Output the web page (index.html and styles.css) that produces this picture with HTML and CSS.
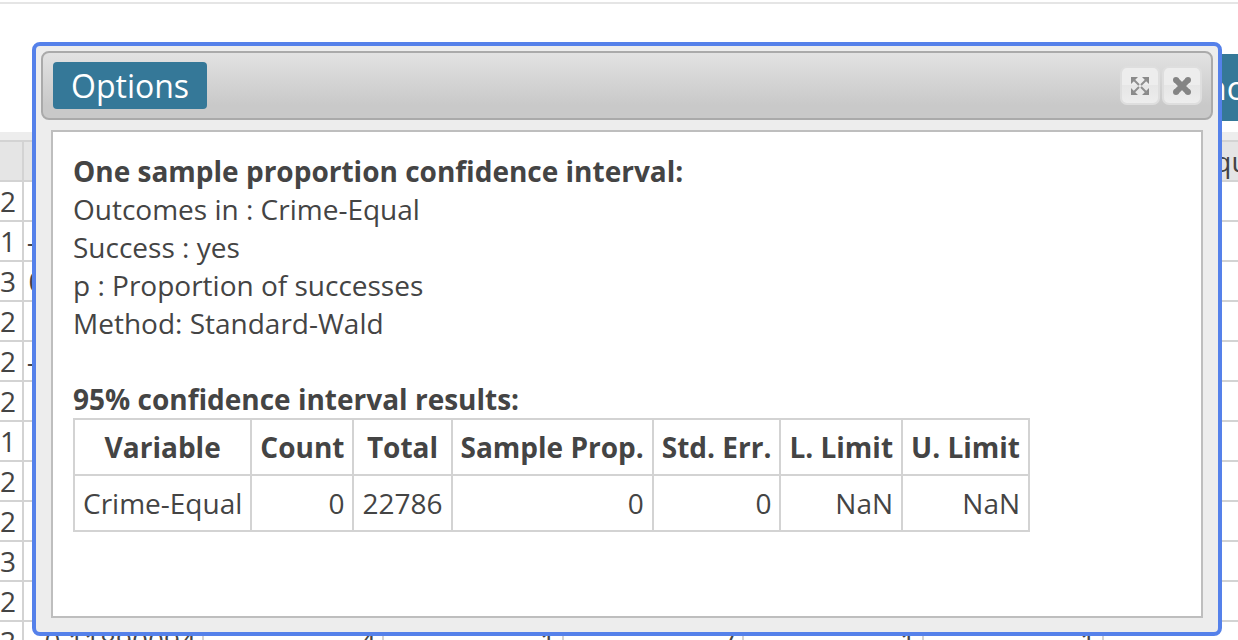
FILE: index.html
```
<!DOCTYPE html>
<html lang="en">

<head>
    <meta charset="UTF-8">
    <title>Options</title>
    <link rel="stylesheet" href="styles.css">
</head>

<body>
    <div class="toolbar">
        <button class="btn btn-page">nce</button>
    </div>

    <!-- data sheet -->
    <div class="sheet">
        <table class="grid">
            <colgroup>
                <col class="col-row">
                <col span="7">
            </colgroup>
            <thead>
                <tr><th></th><th></th><th></th><th></th><th></th><th></th><th></th><th>Crime-Equal</th></tr>
            </thead>
            <tbody>
                <tr><td>2</td><td></td><td></td><td></td><td></td><td></td><td></td><td></td></tr>
                <tr><td>1</td><td>-9.118900e-4</td><td></td><td></td><td></td><td></td><td></td><td></td></tr>
                <tr><td>3</td><td>0.118900094</td><td></td><td></td><td></td><td></td><td></td><td></td></tr>
                <tr><td>2</td><td></td><td></td><td></td><td></td><td></td><td></td><td></td></tr>
                <tr><td>2</td><td>-9.118900e-4</td><td></td><td></td><td></td><td></td><td></td><td></td></tr>
                <tr><td>2</td><td></td><td></td><td></td><td></td><td></td><td></td><td></td></tr>
                <tr><td>1</td><td></td><td></td><td></td><td></td><td></td><td></td><td></td></tr>
                <tr><td>2</td><td></td><td></td><td></td><td></td><td></td><td></td><td></td></tr>
                <tr><td>2</td><td></td><td></td><td></td><td></td><td></td><td></td><td></td></tr>
                <tr><td>3</td><td></td><td></td><td></td><td></td><td></td><td></td><td></td></tr>
                <tr><td>2</td><td></td><td></td><td></td><td></td><td></td><td></td><td></td></tr>
                <tr><td>3</td><td>0.11890094</td><td>4</td><td>1</td><td>7</td><td>1</td><td>1</td><td></td></tr>
            </tbody>
        </table>
    </div>

    <!-- result window -->
    <div class="dialog" role="dialog" aria-label="Results">
        <div class="dialog-header">
            <button class="btn">Options</button>
            <div class="dialog-tools">
                <button class="tool" aria-label="Expand">
                    <svg width="20" height="20" viewBox="0 0 20 20">
                        <path d="M1 1h7L1 8zM19 1v7l-7-7zM1 19v-7l7 7zM19 19h-7l7-7z" fill="#8a8a8a"/>
                        <path d="M3 3l6 6M17 3l-6 6M3 17l6-6M17 17l-6-6" stroke="#8f8f8f" stroke-width="2"/>
                    </svg>
                </button>
                <button class="tool" aria-label="Close">
                    <svg width="20" height="20" viewBox="0 0 20 20">
                        <path d="M4 4l12 12M16 4L4 16" stroke="#848484" stroke-width="6"/>
                        <g fill="#848484">
                            <circle cx="4" cy="4" r="3"/>
                            <circle cx="16" cy="4" r="3"/>
                            <circle cx="4" cy="16" r="3"/>
                            <circle cx="16" cy="16" r="3"/>
                        </g>
                    </svg>
                </button>
            </div>
        </div>
        <div class="dialog-body">
            <b>One sample proportion confidence interval:</b><br>
            Outcomes in : Crime-Equal<br>
            Success : yes<br>
            p : Proportion of successes<br>
            Method: Standard-Wald<br>
            <br>
            <b>95% confidence interval results:</b>
            <table class="results">
                <thead>
                    <tr>
                        <th>Variable</th>
                        <th>Count</th>
                        <th>Total</th>
                        <th>Sample Prop.</th>
                        <th>Std. Err.</th>
                        <th>L. Limit</th>
                        <th>U. Limit</th>
                    </tr>
                </thead>
                <tbody>
                    <tr>
                        <td>Crime-Equal</td>
                        <td>0</td>
                        <td>22786</td>
                        <td>0</td>
                        <td>0</td>
                        <td>NaN</td>
                        <td>NaN</td>
                    </tr>
                </tbody>
            </table>
        </div>
    </div>
</body>

</html>
```

FILE: styles.css
```
* {
    box-sizing: border-box;
}

body {
    margin: 0;
    height: 100vh;
    overflow: hidden;
    background-color: white;
    color: #444;
    font-family: "Open Sans", "Noto Sans", sans-serif;
    font-size: 28px;
    line-height: 38px;
}

.toolbar {
    display: flex;
    justify-content: flex-end;
    height: 130px;
    margin-top: 2px;
    padding-top: 50px;
    border-top: 2px solid #e5e5e5;
}

.btn {
    height: 47px;
    padding: 0 18px;
    border: none;
    border-radius: 4px;
    background-color: #357898;
    color: white;
    font-family: inherit;
    font-size: 32px;
    line-height: 47px;
}

.btn-page {
    height: 67px;
    margin-right: -40px;
    line-height: 67px;
}

.sheet {
    padding-top: 8px;
    overflow: hidden;
    background-color: #ededed;
}

.grid {
    width: 1284px;
    table-layout: fixed;
    border-collapse: separate;
    border-spacing: 0;
    border-top: 2px solid #d3d3d3;
    background-color: white;
}

.grid col {
    width: 180px;
}

.grid .col-row {
    width: 24px;
}

.grid th,
.grid td {
    height: 40px;
    padding: 0 6px 0 0;
    border-right: 2px solid #d3d3d3;
    border-bottom: 2px solid #d3d3d3;
    text-align: right;
}

.grid th {
    padding: 0 8px;
    background-color: #e5e5e5;
    font-weight: normal;
    text-align: left;
}

.dialog {
    position: fixed;
    top: 42px;
    right: 16px;
    bottom: 4px;
    left: 32px;
    display: flex;
    flex-direction: column;
    padding: 5px;
    border: 4px solid #5581ea;
    border-radius: 8px;
    background-color: #ededed;
}

.dialog-header {
    display: flex;
    align-items: center;
    justify-content: space-between;
    height: 69px;
    padding: 0 9px 0 10px;
    border: 2px solid #aaa;
    border-radius: 8px;
    background: linear-gradient(#e2e2e2, #c9c9c9 80%);
}

.dialog-tools {
    display: flex;
    gap: 2px;
}

.tool {
    display: flex;
    align-items: center;
    justify-content: center;
    width: 40px;
    height: 39px;
    padding: 0;
    border: 2px solid #dedede;
    border-radius: 7px;
    background: linear-gradient(#ededed 50%, #e6e6e6 50%, #ededed);
}

.dialog-body {
    flex: 1;
    margin: 10px;
    margin-bottom: 9px;
    padding: 20px;
    border: 2px solid #bebebe;
    background-color: white;
}

.results {
    border-collapse: collapse;
}

.results th,
.results td {
    padding: 8px;
    border: 2px solid #d3d3d3;
    text-align: right;
}

.results th {
    text-align: center;
}
```
